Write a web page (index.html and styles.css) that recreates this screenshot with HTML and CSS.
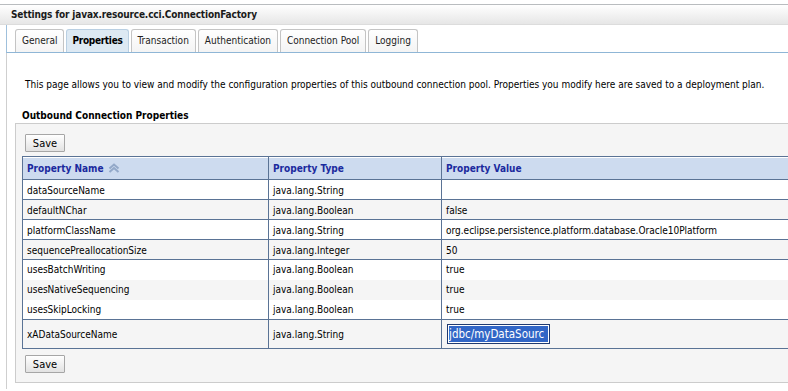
FILE: index.html
```html
<!DOCTYPE html>
<html>
<head>
<meta charset="utf-8">
<link rel="stylesheet" href="styles.css">
</head>
<body>
<div class="page">
  <div class="titlebar">Settings for javax.resource.cci.ConnectionFactory</div>
  <div class="tabbar">
    <div class="tab">General</div>
    <div class="tab active">Properties</div>
    <div class="tab">Transaction</div>
    <div class="tab">Authentication</div>
    <div class="tab">Connection Pool</div>
    <div class="tab">Logging</div>
  </div>
  <div class="content">
    <p class="desc">This page allows you to view and modify the configuration properties of this outbound connection pool. Properties you modify here are saved to a deployment plan.</p>
    <h2 class="heading">Outbound Connection Properties</h2>
    <div class="panel">
      <div class="btnrow"><button class="btn">Save</button></div>
      <table class="grid">
        <colgroup><col class="c1"><col class="c2"><col class="c3"></colgroup>
        <thead>
          <tr>
            <th><span class="thlabel">Property Name</span><svg class="sort" width="12" height="10" viewBox="0 0 12 10"><path d="M1.5 5.5 L6 1.5 L10.5 5.5" fill="none" stroke="#93a9c9" stroke-width="2"/><path d="M1.5 9 L6 5 L10.5 9" fill="none" stroke="#93a9c9" stroke-width="2"/></svg></th>
            <th>Property Type</th>
            <th>Property Value</th>
          </tr>
        </thead>
        <tbody>
          <tr class="odd lined"><td>dataSourceName</td><td>java.lang.String</td><td></td></tr>
          <tr class="even lined"><td>defaultNChar</td><td>java.lang.Boolean</td><td>false</td></tr>
          <tr class="odd lined"><td>platformClassName</td><td>java.lang.String</td><td>org.eclipse.persistence.platform.database.Oracle10Platform</td></tr>
          <tr class="even lined"><td>sequencePreallocationSize</td><td>java.lang.Integer</td><td>50</td></tr>
          <tr class="odd plain"><td>usesBatchWriting</td><td>java.lang.Boolean</td><td>true</td></tr>
          <tr class="even plain"><td>usesNativeSequencing</td><td>java.lang.Boolean</td><td>true</td></tr>
          <tr class="odd lined"><td>usesSkipLocking</td><td>java.lang.Boolean</td><td>true</td></tr>
          <tr class="even lined tall"><td>xADataSourceName</td><td>java.lang.String</td><td><div class="valuebox"><span class="sel">jdbc/myDataSourc</span></div></td></tr>
        </tbody>
      </table>
      <div class="btnrow bottom"><button class="btn">Save</button></div>
    </div>
  </div>
</div>
</body>
</html>
```

FILE: styles.css
```css
html, body {
  margin: 0;
  padding: 0;
  overflow: hidden;
  background: #fff;
}
body {
  font-family: "DejaVu Sans Condensed", "DejaVu Sans", sans-serif;
  font-stretch: condensed;
  font-size: 10px;
  color: #000;
  width: 788px;
  height: 391px;
}
.page {
  padding-top: 4px;
}
.titlebar {
  border-top: 1px solid #b9bcbf;
  border-bottom: 1px solid #dcdcdc;
  height: 19px;
  line-height: 19px;
  padding-left: 11px;
  font-weight: bold;
  font-size: 10px;
  letter-spacing: -0.15px;
  color: #1a1a1a;
  background: linear-gradient(#ffffff, #e6e6e6);
}
.tabbar {
  margin-left: 6px;
  border-left: 1px solid #9fc0dc;
  border-bottom: 1px solid #8fb6d6;
  padding: 4px 0 0 8px;
  display: flex;
  gap: 2px;
  height: 23px;
}
.tab {
  height: 22px;
  line-height: 22px;
  padding: 0 6px;
  border: 1px solid #c4c4c4;
  border-bottom: none;
  border-radius: 3px 3px 0 0;
  background: linear-gradient(#ffffff, #f4f4f4);
  color: #222;
}
.tab.active {
  font-weight: bold;
  letter-spacing: -0.3px;
  padding: 0 5px;
  background: #dde9f3;
  border-color: #b9cfe2;
  color: #000;
}
.content {
  margin-left: 6px;
  border-left: 1px solid #cfcfcf;
  padding: 0 0 6px 8px;
  margin-right: -40px;
}
.desc {
  margin: 0;
  padding: 25px 0 0 10px;
  line-height: 14px;
  white-space: nowrap;
}
.heading {
  margin: 0;
  padding: 17px 0 0 7px;
  font-size: 10px;
  font-weight: bold;
  line-height: 14px;
}
.panel {
  background: #f5f5f5;
  border: 1px solid #cccccc;
  border-right: none;
  padding: 10px 0 9px 6px;
}
.btnrow {
  padding-left: 3px;
  height: 18px;
}
.btnrow.bottom {
  margin-top: 6px;
}
.btn {
  font-family: inherit;
  font-size: 11px;
  width: 40px;
  height: 18px;
  padding: 0;
  margin: 0;
  border: 1px solid #a6a6a6;
  border-radius: 1px;
  background: linear-gradient(#ffffff, #e2e2e2);
  color: #000;
  display: block;
}
.grid {
  margin-top: 4px;
  border-collapse: collapse;
  width: 800px;
  table-layout: fixed;
  border-left: 1px solid #5a7395;
}
.c1 { width: 246px; }
.c2 { width: 173px; }
.grid th {
  background: #cddbef;
  border-top: 1px solid #5a7395;
  border-bottom: 1px solid #5a7395;
  border-left: 1px solid #5a7395;
  box-shadow: inset 0 1px 0 #ffffff;
  color: #1b2a9e;
  font-weight: bold;
  text-align: left;
  height: 22px;
  padding: 0 0 0 4px;
  font-size: 10px;
  white-space: nowrap;
}
.thlabel {
  vertical-align: middle;
}
.sort {
  vertical-align: middle;
  margin-left: 4px;
}
.grid td {
  border-left: 1px solid #5a7395;
  height: 19px;
  padding: 1px 0 0 4px;
  box-sizing: border-box;
  white-space: nowrap;
  overflow: hidden;
}
.grid tr.lined td {
  border-bottom: 1px solid #5a7395;
  height: 20px;
}
.grid tr.plain td {
  height: 20px;
  padding-top: 0;
}
.grid tr.odd { background: #ffffff; }
.grid tr.even { background: #f5f5f5; }
.grid tr.tall td {
  height: 29px;
  padding-top: 0;
}
.valuebox {
  width: 99px;
  height: 18px;
  border: 1px solid #1f3a70;
  box-shadow: inset 0 0 0 1px #ffffff;
  background: #3166c6;
  overflow: hidden;
  white-space: nowrap;
  padding: 0 1px;
  margin-left: 1px;
  box-sizing: content-box;
}
.sel {
  color: #fff;
  font-size: 11.5px;
  line-height: 18px;
}
```
